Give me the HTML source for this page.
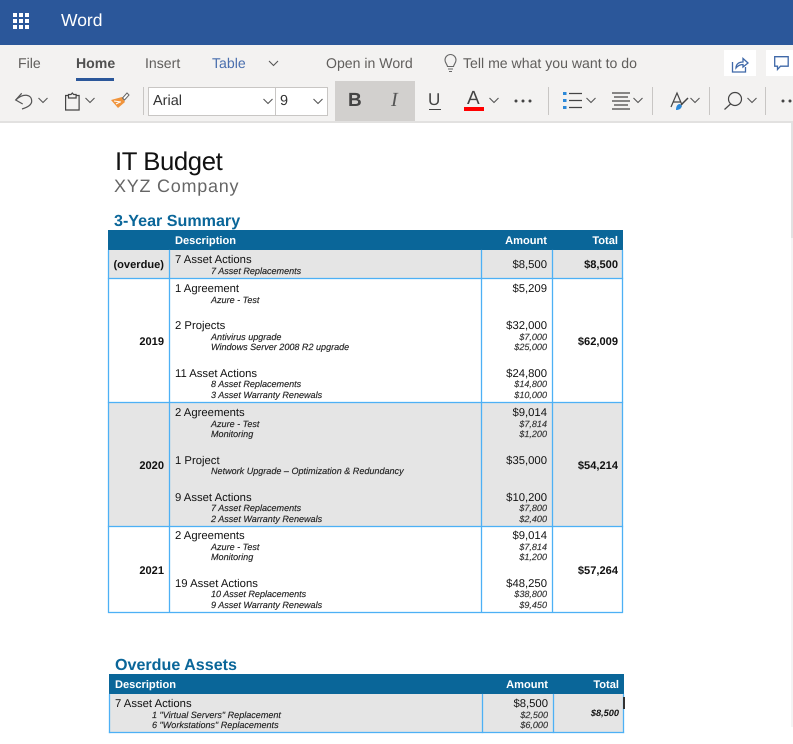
<!DOCTYPE html>
<html><head><meta charset="utf-8"><style>
html,body{margin:0;padding:0;width:793px;height:744px;overflow:hidden;background:#fff}
body{position:relative;font-family:"Liberation Sans",Arial,sans-serif;text-rendering:geometricPrecision}
.a{position:absolute}
.t{position:absolute;white-space:nowrap;line-height:14px;height:14px;color:#111}
.n{font-size:11.3px;left:175px;margin-top:1px}
.i{font-size:9.05px;font-style:italic;left:211px;color:#222;-webkit-text-stroke:.15px #222}
.r{right:246px;text-align:right}
.ra{font-size:11.3px;margin-top:1px}
.ri{font-size:9.05px;font-style:italic;color:#333;-webkit-text-stroke:.15px #333}
.b{font-size:11.1px;font-weight:bold;margin-top:1px}
.rib{position:absolute;white-space:nowrap;font-size:14.1px;line-height:20px;color:#605e5c}
.l{position:absolute;background:#4db0f5;box-shadow:0 0 1px #55b5f5}
.h{position:absolute;color:#fff;font-weight:bold;font-size:11.1px;line-height:14px;white-space:nowrap;margin-top:1px}
svg{position:absolute;overflow:visible}
</style></head><body>
<!-- top bar -->
<div class="a" style="left:0;top:0;width:793px;height:45px;background:#2b579a"></div>
<svg style="left:13px;top:13px" width="17" height="17" fill="#fff"><rect x="0" y="0" width="4" height="4"/><rect x="6" y="0" width="4" height="4"/><rect x="12" y="0" width="4" height="4"/><rect x="0" y="6" width="4" height="4"/><rect x="6" y="6" width="4" height="4"/><rect x="12" y="6" width="4" height="4"/><rect x="0" y="12" width="4" height="4"/><rect x="6" y="12" width="4" height="4"/><rect x="12" y="12" width="4" height="4"/></svg>
<div class="a" style="left:61px;top:9px;color:#fff;font-size:17.5px;line-height:22px">Word</div>
<!-- ribbon -->
<div class="a" style="left:0;top:45px;width:793px;height:76px;background:#f3f2f1"></div>
<div class="a" style="left:0;top:121px;width:793px;height:2px;background:#e2e1e0"></div>
<div class="rib" style="left:18px;top:53px">File</div>
<div class="rib" style="left:76px;top:53px;font-weight:bold;color:#505050">Home</div>
<div class="a" style="left:76px;top:78px;width:38px;height:3px;background:#2b579a"></div>
<div class="rib" style="left:145px;top:53px">Insert</div>
<div class="rib" style="left:212px;top:53px;color:#4a6fae">Table</div>
<svg style="left:268px;top:60px" width="11" height="7" fill="none" stroke="#555" stroke-width="1.1"><path d="M1 1l4.500 4.500L10 1"/></svg>
<div class="rib" style="left:326px;top:53px">Open in Word</div>
<svg style="left:444px;top:54px" width="13" height="19" fill="none" stroke="#666" stroke-width="1.1"><path d="M3.500 12.500C3 10 1 9 1 6a5.500 5.500 0 0 1 11 0c0 3-2 4-2.500 6.500z"/><path d="M4 15h5M5 17.500h3"/></svg>
<div class="rib" style="left:463px;top:53px">Tell me what you want to do</div>
<div class="a" style="left:724px;top:50px;width:32px;height:26px;background:#fff"></div>
<div class="a" style="left:766px;top:50px;width:27px;height:26px;background:#fff"></div>
<svg style="left:731px;top:56px" width="18" height="17" fill="none" stroke="#3f68a8" stroke-width="1.3"><path d="M1.500 6v10h13v-5"/><path d="M5 12c0-4 3-6 7-6V2.500l5 4.500-5 4V8.500c-3 0-5 1-7 3.500z"/></svg>
<svg style="left:774px;top:56px" width="15" height="15" fill="none" stroke="#3f68a8" stroke-width="1.3"><path d="M.7.7h13.500v9.500H6.500L3.500 13.500v-3.300H.7z"/></svg>
<!-- toolbar left -->
<svg style="left:14px;top:92px" width="19" height="18" fill="none" stroke="#555" stroke-width="1.2"><path d="M7.700 1.300L1.700 8l7 4"/><path d="M1.700 8C9 1 17.500 2 17.700 9c.1 3.500-3 6-9.700 8"/></svg>
<svg style="left:38px;top:97px" width="10" height="7" fill="none" stroke="#555" stroke-width="1.1"><path d="M.5 1l4.500 4.500L9.500 1"/></svg>
<svg style="left:65px;top:92px" width="16" height="19" fill="none" stroke="#444" stroke-width="1.2"><path d="M.6 3.500h13.500v14.500H.6z"/><path d="M3.500 6V2.500h2.500L7.300 1l1.300 1.500h2.500V6z" fill="#f3f2f1"/></svg>
<svg style="left:85px;top:97px" width="10" height="7" fill="none" stroke="#555" stroke-width="1.1"><path d="M.5 1l4.500 4.500L9.500 1"/></svg>
<svg style="left:110px;top:92px" width="20" height="17"><path d="M1 8l11-3 3 5-7 6z" fill="#f0943c"/><path d="M4 9l7 1M6 12l4-2" stroke="#fff" stroke-width="1"/><path d="M12.500 6l4.500-5 2 2-4.500 5z" fill="#fff" stroke="#666" stroke-width="1"/></svg>
<div class="a" style="left:143px;top:87px;width:1px;height:28px;background:#c8c6c4"></div>
<div class="a" style="left:148px;top:87px;width:178px;height:27px;background:#fff;border:1px solid #c8c6c4"></div>
<div class="a" style="left:275px;top:88px;width:1px;height:27px;background:#c8c6c4"></div>
<div class="a" style="left:153px;top:91px;font-size:14.500px;line-height:20px;color:#333">Arial</div>
<div class="a" style="left:280px;top:91px;font-size:14.500px;line-height:20px;color:#333">9</div>
<svg style="left:263px;top:98px" width="10" height="7" fill="none" stroke="#555" stroke-width="1.1"><path d="M.5 1l4.500 4.500L9.500 1"/></svg>
<svg style="left:313px;top:98px" width="10" height="7" fill="none" stroke="#555" stroke-width="1.1"><path d="M.5 1l4.500 4.500L9.500 1"/></svg>
<div class="a" style="left:335px;top:81px;width:80px;height:40px;background:#d2d0ce"></div>
<div class="a" style="left:348px;top:90px;font-size:19px;font-weight:bold;line-height:22px;color:#444">B</div>
<div class="a" style="left:391px;top:89px;font-family:'Liberation Serif',serif;font-size:20px;font-style:italic;line-height:22px;color:#555">I</div>
<div class="a" style="left:428px;top:90px;font-size:17px;line-height:20px;color:#444">U</div>
<div class="a" style="left:429px;top:109px;width:12px;height:1px;background:#444"></div>
<div class="a" style="left:467px;top:89px;font-size:19px;line-height:20px;color:#444">A</div>
<div class="a" style="left:464px;top:107px;width:20px;height:4px;background:#f00"></div>
<svg style="left:489px;top:97px" width="10" height="7" fill="none" stroke="#555" stroke-width="1.1"><path d="M.5 1l4.500 4.500L9.500 1"/></svg>
<svg style="left:514px;top:99px" width="18" height="4" fill="#444"><circle cx="2" cy="2" r="1.500"/><circle cx="9" cy="2" r="1.500"/><circle cx="16" cy="2" r="1.500"/></svg>
<div class="a" style="left:548px;top:87px;width:1px;height:28px;background:#c8c6c4"></div>
<svg style="left:563px;top:92px" width="19" height="18"><g fill="#2b88d8"><rect x="0" y="0" width="3.500" height="3"/><rect x="0" y="7" width="3.500" height="3"/><rect x="0" y="14" width="3.500" height="3"/></g><g stroke="#444" stroke-width="1.200"><path d="M6 1.500h13M6 8.500h13M6 15.500h13"/></g></svg>
<svg style="left:586px;top:97px" width="10" height="7" fill="none" stroke="#555" stroke-width="1.1"><path d="M.5 1l4.500 4.500L9.500 1"/></svg>
<svg style="left:612px;top:92px" width="18" height="18" stroke="#444" stroke-width="1.200"><path d="M0 1h18M2 5h14M0 9h18M2 13h14M0 17h18"/></svg>
<svg style="left:633px;top:97px" width="10" height="7" fill="none" stroke="#555" stroke-width="1.1"><path d="M.5 1l4.500 4.500L9.500 1"/></svg>
<div class="a" style="left:652px;top:87px;width:1px;height:28px;background:#c8c6c4"></div>
<svg style="left:670px;top:92px" width="20" height="19" fill="none"><path d="M1 15L7 1l5 12M3.500 10h7" stroke="#444" stroke-width="1.200"/><path d="M6 18c0-3 1-6 4-6l2 2c-1 3-3 4-6 4z" fill="#2b88d8"/><path d="M11 13l7-7" stroke="#444" stroke-width="1.500"/></svg>
<svg style="left:690px;top:97px" width="10" height="7" fill="none" stroke="#555" stroke-width="1.1"><path d="M.5 1l4.500 4.500L9.500 1"/></svg>
<div class="a" style="left:709px;top:87px;width:1px;height:28px;background:#c8c6c4"></div>
<svg style="left:724px;top:92px" width="19" height="18" fill="none" stroke="#444" stroke-width="1.200"><circle cx="11" cy="7" r="6.500"/><path d="M6.500 12L.5 17.500"/></svg>
<svg style="left:747px;top:97px" width="10" height="7" fill="none" stroke="#555" stroke-width="1.1"><path d="M.5 1l4.500 4.500L9.500 1"/></svg>
<div class="a" style="left:765px;top:87px;width:1px;height:28px;background:#c8c6c4"></div>
<svg style="left:781px;top:99px" width="12" height="4" fill="#444"><circle cx="2" cy="2" r="1.500"/><circle cx="9" cy="2" r="1.500"/></svg>
<!-- scrollbar -->
<div class="a" style="left:791px;top:123px;width:2px;height:604px;background:#f4f4f4"></div>
<div class="a" style="left:791px;top:123px;width:2px;height:115px;background:#e2e2e2"></div>
<!-- headings -->
<div class="a" style="left:115px;top:147px;font-size:25.7px;line-height:30px;color:#111;letter-spacing:-.4px;white-space:nowrap">IT Budget</div>
<div class="a" style="left:114px;top:175px;font-size:18px;line-height:22px;color:#666;letter-spacing:.75px;white-space:nowrap">XYZ Company</div>
<div class="a" style="left:114px;top:211px;font-size:16.1px;font-weight:bold;line-height:20px;color:#0a6699;white-space:nowrap">3-Year Summary</div>
<!-- table 1 backgrounds -->
<div class="a" style="left:108px;top:230px;width:515px;height:20px;background:#0a6699"></div>
<div class="a" style="left:108px;top:250px;width:515px;height:28px;background:#e5e5e5"></div>
<div class="a" style="left:108px;top:403px;width:515px;height:124px;background:#e5e5e5"></div>
<!-- table 1 lines -->
<div class="l" style="left:108px;top:250px;width:1px;height:362px"></div>
<div class="l" style="left:169px;top:250px;width:1px;height:362px"></div>
<div class="l" style="left:481px;top:250px;width:1px;height:362px"></div>
<div class="l" style="left:552px;top:250px;width:1px;height:362px"></div>
<div class="l" style="left:622px;top:250px;width:1px;height:362px"></div>
<div class="l" style="left:108px;top:278px;width:515px;height:1px"></div>
<div class="l" style="left:108px;top:402px;width:515px;height:1px"></div>
<div class="l" style="left:108px;top:526px;width:515px;height:1px"></div>
<div class="l" style="left:108px;top:612px;width:515px;height:1px"></div>
<div class="h" style="left:175px;top:233px">Description</div>
<div class="h" style="right:246px;top:233px">Amount</div>
<div class="h" style="right:175px;top:233px">Total</div>
<!-- first col -->
<div class="t b" style="right:629px;top:257px">(overdue)</div>
<div class="t b" style="right:629px;top:334px">2019</div>
<div class="t b" style="right:629px;top:458px">2020</div>
<div class="t b" style="right:629px;top:563px">2021</div>
<!-- desc -->
<div class="t n" style="top:252px">7 Asset Actions</div>
<div class="t i" style="top:264px">7 Asset Replacements</div>
<div class="t n" style="top:281px">1 Agreement</div>
<div class="t i" style="top:293px">Azure - Test</div>
<div class="t n" style="top:318px">2 Projects</div>
<div class="t i" style="top:330px">Antivirus upgrade</div>
<div class="t i" style="top:340px">Windows Server 2008 R2 upgrade</div>
<div class="t n" style="top:366px">11 Asset Actions</div>
<div class="t i" style="top:377px">8 Asset Replacements</div>
<div class="t i" style="top:388px">3 Asset Warranty Renewals</div>
<div class="t n" style="top:405px">2 Agreements</div>
<div class="t i" style="top:417px">Azure - Test</div>
<div class="t i" style="top:427px">Monitoring</div>
<div class="t n" style="top:453px">1 Project</div>
<div class="t i" style="top:464px">Network Upgrade – Optimization &amp; Redundancy</div>
<div class="t n" style="top:490px">9 Asset Actions</div>
<div class="t i" style="top:501px">7 Asset Replacements</div>
<div class="t i" style="top:512px">2 Asset Warranty Renewals</div>
<div class="t n" style="top:528px">2 Agreements</div>
<div class="t i" style="top:540px">Azure - Test</div>
<div class="t i" style="top:550px">Monitoring</div>
<div class="t n" style="top:576px">19 Asset Actions</div>
<div class="t i" style="top:587px">10 Asset Replacements</div>
<div class="t i" style="top:598px">9 Asset Warranty Renewals</div>
<!-- amounts -->
<div class="t r ra" style="top:257px">$8,500</div>
<div class="t r ra" style="top:281px">$5,209</div>
<div class="t r ra" style="top:318px">$32,000</div>
<div class="t r ri" style="top:330px">$7,000</div>
<div class="t r ri" style="top:340px">$25,000</div>
<div class="t r ra" style="top:366px">$24,800</div>
<div class="t r ri" style="top:377px">$14,800</div>
<div class="t r ri" style="top:388px">$10,000</div>
<div class="t r ra" style="top:405px">$9,014</div>
<div class="t r ri" style="top:417px">$7,814</div>
<div class="t r ri" style="top:427px">$1,200</div>
<div class="t r ra" style="top:453px">$35,000</div>
<div class="t r ra" style="top:490px">$10,200</div>
<div class="t r ri" style="top:501px">$7,800</div>
<div class="t r ri" style="top:512px">$2,400</div>
<div class="t r ra" style="top:528px">$9,014</div>
<div class="t r ri" style="top:540px">$7,814</div>
<div class="t r ri" style="top:550px">$1,200</div>
<div class="t r ra" style="top:576px">$48,250</div>
<div class="t r ri" style="top:587px">$38,800</div>
<div class="t r ri" style="top:598px">$9,450</div>
<!-- totals -->
<div class="t b" style="right:175px;top:257px">$8,500</div>
<div class="t b" style="right:175px;top:334px">$62,009</div>
<div class="t b" style="right:175px;top:458px">$54,214</div>
<div class="t b" style="right:175px;top:563px">$57,264</div>
<!-- table 2 -->
<div class="a" style="left:115px;top:655px;font-size:16.1px;font-weight:bold;line-height:20px;color:#0a6699;white-space:nowrap">Overdue Assets</div>
<div class="a" style="left:109px;top:674px;width:515px;height:20px;background:#0a6699"></div>
<div class="a" style="left:109px;top:694px;width:515px;height:38px;background:#e5e5e5"></div>
<div class="l" style="left:109px;top:694px;width:1px;height:39px"></div>
<div class="l" style="left:482px;top:694px;width:1px;height:39px"></div>
<div class="l" style="left:553px;top:694px;width:1px;height:39px"></div>
<div class="l" style="left:623px;top:694px;width:1px;height:39px"></div>
<div class="l" style="left:109px;top:732px;width:515px;height:1px"></div>
<div class="a" style="left:623px;top:697px;width:2px;height:12px;background:#333"></div>
<div class="h" style="left:115px;top:677px">Description</div>
<div class="h" style="right:245px;top:677px">Amount</div>
<div class="h" style="right:174px;top:677px">Total</div>
<div class="t n" style="left:115px;top:696px">7 Asset Actions</div>
<div class="t i" style="left:152px;top:708px">1 "Virtual Servers" Replacement</div>
<div class="t i" style="left:152px;top:718px">6 "Workstations" Replacements</div>
<div class="t ra" style="right:245px;top:696px">$8,500</div>
<div class="t ri" style="right:245px;top:708px">$2,500</div>
<div class="t ri" style="right:245px;top:718px">$6,000</div>
<div class="t" style="right:174px;top:706px;font-size:9.2px;font-weight:bold;font-style:italic">$8,500</div>
</body></html>
